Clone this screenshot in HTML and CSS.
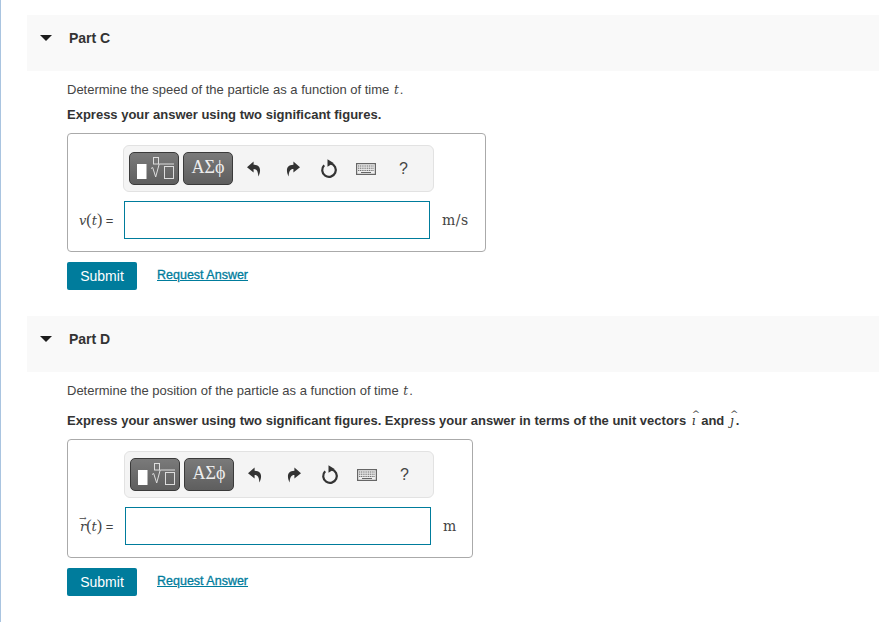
FILE: index.html
```html
<!DOCTYPE html>
<html lang="en">
<head>
<meta charset="utf-8">
<title>Parts C and D</title>
<link rel="stylesheet" href="styles.css">
</head>
<body>
<svg class="defs" width="0" height="0" aria-hidden="true">
  <symbol id="i-tmpl" viewBox="0 0 48 27">
    <rect x="7" y="9" width="9.5" height="15" fill="#fff"/>
    <rect x="23.5" y="2.5" width="5" height="6.5" fill="none" stroke="#ddd"/>
    <path d="M21 13.5l1.7 -1 3 9.5 3.5 -13H44" fill="none" stroke="#ddd"/>
    <rect x="34.5" y="11.5" width="9" height="12" fill="none" stroke="#ddd"/>
  </symbol>
  <symbol id="i-undo" viewBox="0 0 14 16">
    <path d="M6.6 0.5L0 6.2 6.6 11.4V8C9.6 7.9 11 10 11.4 15.5 13.8 10.6 14.6 4 6.6 3.8Z" fill="#333"/>
  </symbol>
  <symbol id="i-redo" viewBox="0 0 14 16">
    <path d="M7.4 0.5L14 6.2 7.4 11.4V8C4.4 7.9 3 10 2.6 15.5 0.2 10.6 -0.6 4 7.4 3.8Z" fill="#333"/>
  </symbol>
  <symbol id="i-reset" viewBox="0 0 18 20">
    <path d="M10.5 4.4A6.8 6.8 0 1 1 4.2 6.2" fill="none" stroke="#333" stroke-width="2.2"/>
    <path d="M7.5 0.3L13.6 4 7.5 7.7Z" fill="#333"/>
  </symbol>
  <symbol id="i-keys" viewBox="0 0 20 12">
    <rect x="0.6" y="0.6" width="18.8" height="10.8" fill="#eee" stroke="#666" stroke-width="1.2"/>
    <path d="M2 3h16M2 5.2h16M2 7.4h16" stroke="#666" stroke-dasharray="1.2 .6"/>
    <path d="M5 9.5h10" stroke="#666"/>
  </symbol>
</svg>
<main class="page">
  <section class="part">
    <header class="part-head"><span class="caret"></span><h2 class="part-title">Part C</h2></header>
    <div class="part-body">
      <p class="prompt">Determine the speed of the particle as a function of time <i class="math">t</i>.</p>
      <p class="instr">Express your answer using two significant figures.</p>
      <div class="answer answer-c">
        <div class="toolbar">
          <button class="tool tool-tmpl" type="button"><svg width="48" height="27"><use href="#i-tmpl"/></svg></button>
          <button class="tool tool-sym" type="button">ΑΣϕ</button>
          <svg class="ic ic-undo" width="14" height="16"><use href="#i-undo"/></svg>
          <svg class="ic ic-redo" width="14" height="16"><use href="#i-redo"/></svg>
          <svg class="ic ic-reset" width="18" height="20"><use href="#i-reset"/></svg>
          <svg class="ic ic-keys" width="20" height="12"><use href="#i-keys"/></svg>
          <span class="help">?</span>
        </div>
        <div class="entry">
          <span class="lhs"><i class="math">v</i><span class="paren">(<i class="math">t</i>)</span> =</span>
          <input class="field" type="text" aria-label="v(t)">
          <span class="unit">m/s</span>
        </div>
      </div>
      <div class="actions"><button class="submit" type="button">Submit</button><a class="req" href="#">Request Answer</a></div>
    </div>
  </section>
  <section class="part part-d">
    <header class="part-head"><span class="caret"></span><h2 class="part-title">Part D</h2></header>
    <div class="part-body">
      <p class="prompt">Determine the position of the particle as a function of time <i class="math">t</i>.</p>
      <p class="instr instr-d">Express your answer using two significant figures. Express your answer in terms of the unit vectors <span class="hat">ı</span> and <span class="hat">ȷ</span>.</p>
      <div class="answer answer-d">
        <div class="toolbar">
          <button class="tool tool-tmpl" type="button"><svg width="48" height="27"><use href="#i-tmpl"/></svg></button>
          <button class="tool tool-sym" type="button">ΑΣϕ</button>
          <svg class="ic ic-undo" width="14" height="16"><use href="#i-undo"/></svg>
          <svg class="ic ic-redo" width="14" height="16"><use href="#i-redo"/></svg>
          <svg class="ic ic-reset" width="18" height="20"><use href="#i-reset"/></svg>
          <svg class="ic ic-keys" width="20" height="12"><use href="#i-keys"/></svg>
          <span class="help">?</span>
        </div>
        <div class="entry">
          <span class="lhs"><span class="vec">r</span><span class="paren">(<i class="math">t</i>)</span> =</span>
          <input class="field" type="text" aria-label="r(t)">
          <span class="unit">m</span>
        </div>
      </div>
      <div class="actions"><button class="submit" type="button">Submit</button><a class="req" href="#">Request Answer</a></div>
    </div>
  </section>
</main>
</body>
</html>
```
FILE: styles.css
```css
* { box-sizing: border-box; }
html, body { margin: 0; padding: 0; }
body {
  height: 622px;
  overflow: hidden;
  background: #fff;
  color: #333;
  font: 13px/16px "Liberation Sans", Arial, sans-serif;
}
.defs { position: absolute; }
.page {
  height: 622px;
  border-left: 1px solid #a9c4e0;
  padding: 15px 0 0 26px;
}
.part-head {
  height: 56px;
  background: #f9f9f9;
  display: flex;
  align-items: flex-start;
  padding: 15px 0 0 13px;
}
.caret {
  width: 0;
  height: 0;
  margin-top: 5px;
  border-left: 6px solid transparent;
  border-right: 6px solid transparent;
  border-top: 6px solid #1c1c1c;
}
.part-title {
  margin: 0 0 0 17px;
  font-size: 14px;
  line-height: 16px;
  font-weight: bold;
  color: #333;
}
.part-body { padding: 11px 0 0 40px; }
.prompt { margin: 0; font-size: 13px; line-height: 16px; color: #444; }
.instr { margin: 9px 0 0; font-size: 13px; line-height: 16px; font-weight: bold; color: #333; }
.instr-d { margin-top: 14px; }
.math { font-family: "DejaVu Serif", serif; font-style: italic; font-size: 12px; }
.lhs .math { font-size: 13px; }
.prompt .math { margin-left: 1px; margin-right: 1px; }
.hat { position: relative; font-family: "DejaVu Serif", serif; font-style: italic; font-weight: normal; font-size: 12px; margin: 0 2px; }
.hat::before { content: "^"; position: absolute; left: 0; top: -8px; font-size: 10px; font-style: normal; }
.answer {
  margin-top: 10px;
  border: 1px solid #aaa;
  border-radius: 4px;
  background: #fff;
  height: 119px;
}
.answer-c { width: 419px; padding: 11px 0 0 55px; }
.answer-d { width: 406px; padding: 11px 0 0 56px; }
.toolbar {
  width: 311px;
  height: 47px;
  background: #f4f4f4;
  border: 1px solid #e2e2e2;
  border-radius: 6px;
  display: flex;
  align-items: center;
  padding: 0 0 0 5px;
}
.answer-d .toolbar { width: 310px; }
.tool {
  height: 33px;
  border: 1px solid #3a3a3a;
  border-radius: 5px;
  background: linear-gradient(#7a7a7a, #5e5e5e);
  color: #eee;
  padding: 0;
  display: flex;
  align-items: center;
  justify-content: center;
}
.tool-tmpl { width: 50px; }
.tool-sym {
  width: 50px;
  margin-left: 4px;
  padding-bottom: 2px;
  font: 18px "Liberation Serif", serif;
}
.ic { flex: none; }
.ic-undo { margin-left: 14px; }
.ic-redo { margin-left: 25px; }
.ic-reset { margin-left: 20px; }
.ic-keys { margin-left: 18px; }
.help { margin-left: 23px; font-size: 16px; color: #444; }
.entry {
  display: flex;
  align-items: center;
  margin: 9px 0 0 -45px;
}
.lhs { width: 46px; padding-left: 1px; font-size: 13px; color: #444; flex: none; white-space: nowrap; }
.paren { font-family: "Liberation Serif", serif; font-size: 16px; }
.vec { position: relative; font-family: "DejaVu Serif", serif; font-style: italic; font-size: 13px; }
.vec::before { content: "→"; position: absolute; left: -1px; top: -9px; font-size: 9px; font-style: normal; }
.field {
  width: 306px;
  height: 38px;
  border: 1px solid #007c9c;
  background: #fff;
  outline: 0;
  flex: none;
}
.unit { margin-left: 12px; font-family: "DejaVu Serif", serif; font-size: 14px; letter-spacing: 0.5px; color: #444; }
.actions { display: flex; align-items: center; margin-top: 10px; }
.submit {
  width: 70px;
  height: 28px;
  background: #007c9c;
  color: #fff;
  border: 0;
  border-radius: 2px;
  font: 14px "Liberation Sans", Arial, sans-serif;
  padding: 0;
}
.req {
  margin-left: 20px;
  margin-top: -3px;
  color: #007c9c;
  font-size: 12.5px;
  -webkit-text-stroke: 0.3px #007c9c;
  text-decoration: underline;
}
.part-d { margin-top: 26px; }
```
